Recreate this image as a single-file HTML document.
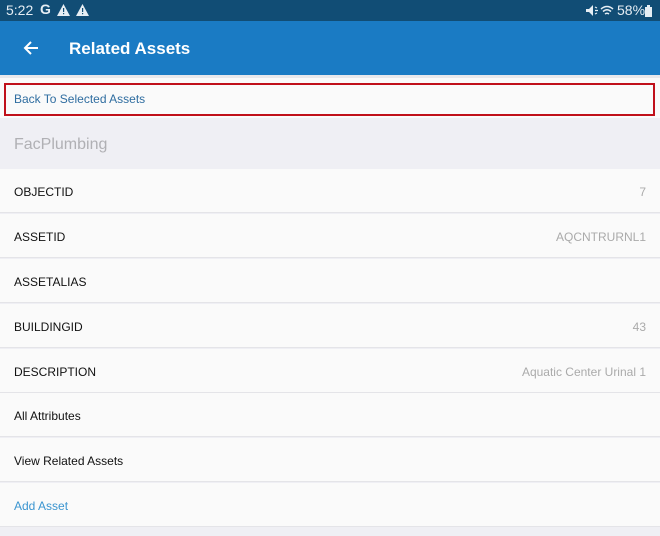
<!DOCTYPE html>
<html><head><style>
*{margin:0;padding:0;box-sizing:border-box}
body{width:660px;height:536px;overflow:hidden;background:#efeff4;font-family:"Liberation Sans",Arial,sans-serif;position:relative}
.sb{position:absolute;top:0;left:0;width:660px;height:21px;background:#114d75;color:#e6eef4;font-size:14px}
.hd{position:absolute;top:21px;left:0;width:660px;height:54px;background:#1a7bc4;color:#fff}
.top{position:absolute;top:75px;left:0;width:660px;height:43px;background:#fafafa;border-top:3px solid #e8e8ec}
.red{position:absolute;top:83px;left:4px;width:651px;height:33px;border:2px solid #c0101a}
.sec{position:absolute;top:118px;left:0;width:660px;height:51px;background:#efeff4;color:#b0b0b4;font-size:16px;padding:18px 0 0 14px}
.row{position:absolute;left:0;width:660px;height:44px;background:#fafafa;border-bottom:1px solid #e4e4e8;font-size:12px;color:#111;padding-top:16px;padding-left:14px}
.row span{position:absolute;right:14px;top:16px;color:#aaa}
</style></head><body>
<div class="sb">
<span style="position:absolute;left:6px;top:2px">5:22</span>
<span style="position:absolute;left:40px;top:1px;font-weight:bold">G</span>
<svg style="position:absolute;left:57px;top:4px" width="13" height="12"><path d="M6.5 0L13 12H0Z" fill="#e6eef4"/><rect x="6" y="4" width="1.2" height="4" fill="#114d75"/><rect x="6" y="9" width="1.2" height="1.2" fill="#114d75"/></svg>
<svg style="position:absolute;left:76px;top:4px" width="13" height="12"><path d="M6.5 0L13 12H0Z" fill="#e6eef4"/><rect x="6" y="4" width="1.2" height="4" fill="#114d75"/><rect x="6" y="9" width="1.2" height="1.2" fill="#114d75"/></svg>
<svg style="position:absolute;left:586px;top:5px" width="12" height="11"><path d="M0 4H3L7 0V11L3 7H0Z" fill="#e6eef4"/><path d="M9 2L11 3M9 5.5H12M9 9L11 8" stroke="#e6eef4" stroke-width="1.2"/></svg>
<svg style="position:absolute;left:600px;top:5px" width="14" height="11"><path d="M1 4Q7 -1 13 4M3 6.5Q7 3 11 6.5M5 9Q7 7.5 9 9" stroke="#e6eef4" stroke-width="1.5" fill="none"/></svg>
<span style="position:absolute;left:617px;top:2px">58%</span>
<svg style="position:absolute;left:645px;top:5px" width="7" height="12"><rect x="2" y="0" width="3" height="2" fill="#e6eef4"/><rect x="0" y="2" width="7" height="10" fill="#e6eef4"/></svg>
</div>
<div class="hd">
<svg style="position:absolute;left:23px;top:19px" width="16" height="16"><path d="M15 8H2M8 2L2 8L8 14" stroke="#fff" stroke-width="2" fill="none"/></svg>
<div style="position:absolute;left:69px;top:18px;font-size:17px;font-weight:bold">Related Assets</div>
</div>
<div class="top"></div>
<div class="red"><div style="position:absolute;left:8px;top:7px;font-size:12px;color:#2f6da0">Back To Selected Assets</div></div>
<div class="sec">FacPlumbing</div>
<div class="row" style="top:169px">OBJECTID<span>7</span></div>
<div class="row" style="top:214px">ASSETID<span>AQCNTRURNL1</span></div>
<div class="row" style="top:259px">ASSETALIAS</div>
<div class="row" style="top:304px">BUILDINGID<span>43</span></div>
<div class="row" style="top:349px">DESCRIPTION<span>Aquatic Center Urinal 1</span></div>
<div class="row" style="top:393px">All Attributes</div>
<div class="row" style="top:438px">View Related Assets</div>
<div class="row" style="top:483px;color:#3b95d0">Add Asset</div>
</body></html>
